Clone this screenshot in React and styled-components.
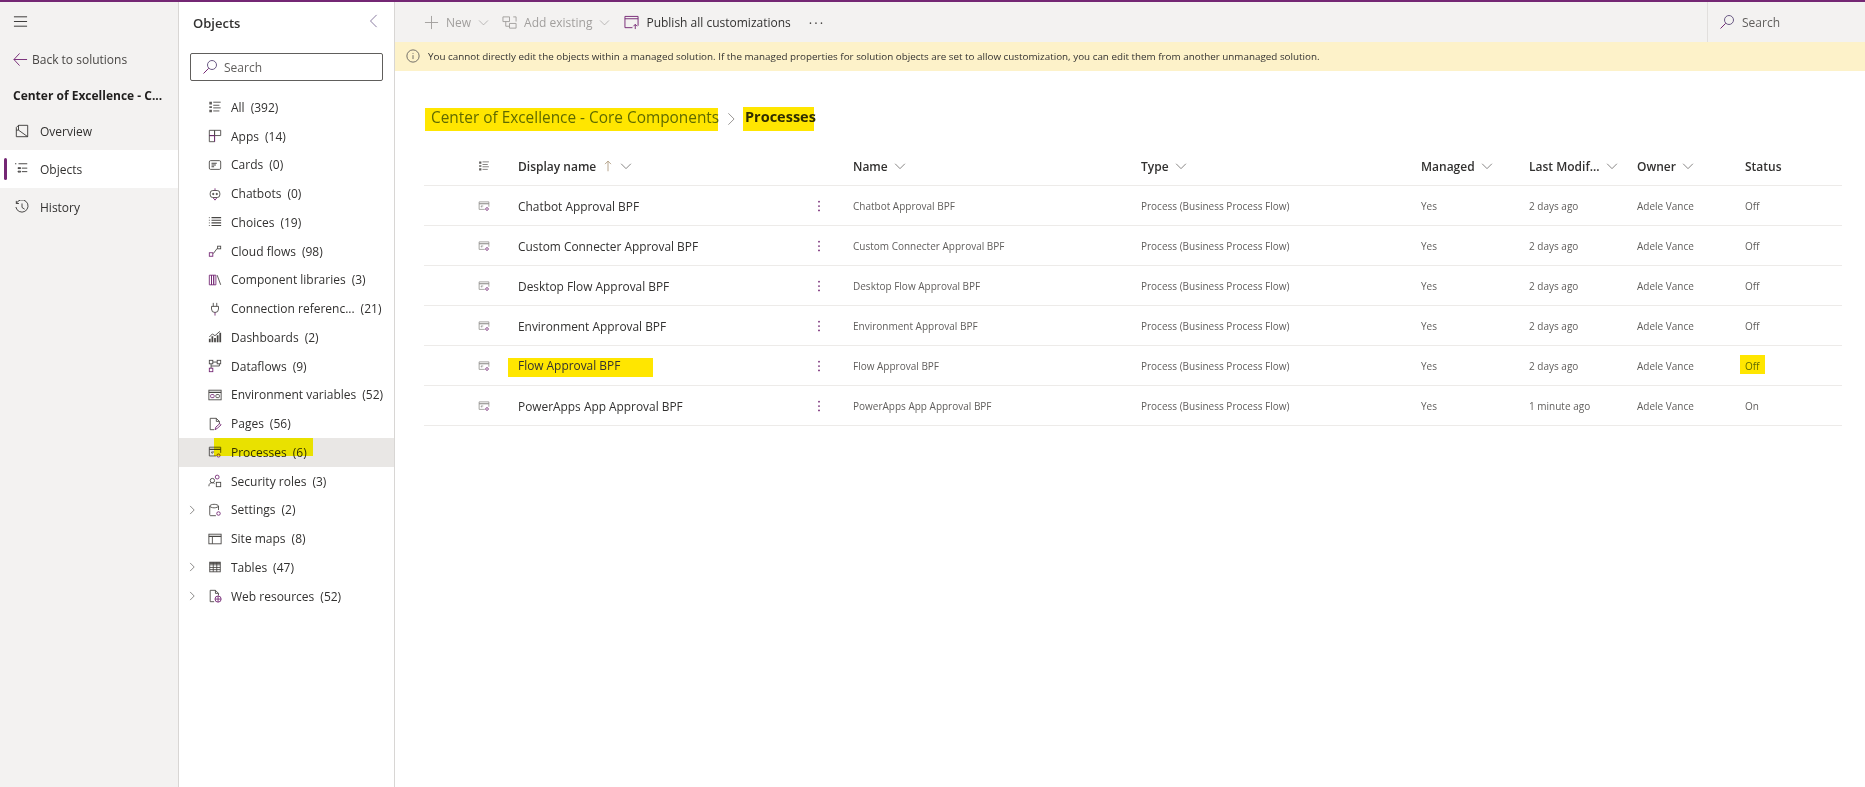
import React from "react"
import styled, { createGlobalStyle } from "styled-components"

const FONT = `"Open Sans", "Noto Sans", "Liberation Sans", sans-serif`

const Global = createGlobalStyle`
  html, body { margin: 0; padding: 0; background: #fff; }
  body { font-family: ${FONT}; color: #323130; overflow: hidden; }
  * { box-sizing: border-box; }
`

const Page = styled.div`
  height: 787px;
  display: flex;
  flex-direction: column;
  border-top: 2px solid #742774;
`

const Shell = styled.div`
  flex: 1;
  display: flex;
  min-height: 0;
`

const Rail = styled.nav`
  width: 179px;
  flex: none;
  background: #f3f2f1;
  border-right: 1px solid #d8d6d4;
  display: flex;
  flex-direction: column;
`

const Burger = styled.div`
  height: 38px;
  padding: 0 0 0 13px;
  display: flex;
  align-items: center;
  color: #323130;
`

const BackLink = styled.div`
  height: 38px;
  padding-left: 13px;
  display: flex;
  align-items: center;
  gap: 4px;
  font-size: 12px;
  color: #484644;
`

const RailTitle = styled.div`
  height: 34px;
  padding: 0 0 0 13px;
  display: flex;
  align-items: center;
  font-size: 12px;
  font-weight: 700;
  color: #201f1e;
  white-space: nowrap;
`

const RailItem = styled.div`
  position: relative;
  height: 38px;
  padding-left: 15px;
  display: flex;
  align-items: center;
  gap: 11px;
  font-size: 12px;
  color: #323130;
  background: ${props => props.$active ? "#fff" : "transparent"};
  &::before {
    content: "";
    display: ${props => props.$active ? "block" : "none"};
    position: absolute;
    left: 4px;
    top: 8px;
    bottom: 8px;
    width: 3px;
    border-radius: 2px;
    background: #742774;
  }
`

const Panel = styled.aside`
  width: 216px;
  flex: none;
  border-right: 1px solid #d8d6d4;
  display: flex;
  flex-direction: column;
`

const PanelHead = styled.div`
  height: 41px;
  padding: 0 13px 0 14px;
  display: flex;
  align-items: center;
  justify-content: space-between;
  font-size: 13px;
  font-weight: 600;
  color: #323130;
`

const PanelBack = styled.span`
  display: flex;
  margin-top: -3px;
  color: #7a6a94;
`

const SearchBox = styled.div`
  height: 28px;
  margin: 10px 11px 0 11px;
  padding-left: 11px;
  border: 1px solid #605e5c;
  border-radius: 2px;
  display: flex;
  align-items: center;
  gap: 6px;
  font-size: 12px;
  color: #605e5c;
`

const ObjectList = styled.ul`
  list-style: none;
  margin: 12px 0 0;
  padding: 0;
`

const ObjectRow = styled.li`
  height: 28.75px;
  padding-left: 8px;
  display: grid;
  grid-template-columns: 21px 16px 1fr;
  align-items: center;
  font-size: 12px;
  color: #323130;
  white-space: nowrap;
  background: ${props => props.$selected ? "#e9e7e5" : "transparent"};
`

const Caret = styled.span`
  display: flex;
  color: #484644;
`

const ObjectGlyph = styled.span`
  display: flex;
  color: #484644;
`

const ObjectLabel = styled.span`
  position: relative;
  padding-left: 7px;
  display: flex;
  gap: 6px;
`

// marker pen strokes laid over the screenshot, multiplied so what is under them shows through
const Marker = styled.span`
  display: inline-block;
  background: #ffe600;
  mix-blend-mode: multiply;
`

const SideStroke = styled.span`
  position: absolute;
  left: -10px;
  top: -6px;
  width: 99px;
  height: 18px;
  background: #fff900;
  mix-blend-mode: multiply;
`

const Content = styled.main`
  flex: 1;
  min-width: 0;
  display: flex;
  flex-direction: column;
`

const Toolbar = styled.div`
  height: 40px;
  flex: none;
  background: #f3f2f1;
  padding-left: 29px;
  display: flex;
  align-items: center;
`

const ToolButton = styled.div`
  display: flex;
  align-items: center;
  gap: 7px;
  margin-right: ${props => props.$gap || 13}px;
  font-size: 12px;
  color: ${props => props.$disabled ? "#a19f9d" : "#323130"};
`

const Dots = styled.span`
  font-size: 13px;
  letter-spacing: 2px;
  line-height: 1;
  margin: 2px 0 0 11px;
  color: #484644;
`

const ToolSearch = styled.div`
  margin-left: auto;
  width: 158px;
  height: 100%;
  border-left: 1px solid #e1dfdd;
  padding-left: 11px;
  display: flex;
  align-items: center;
  gap: 7px;
  font-size: 12px;
  color: #605e5c;
`

const Banner = styled.div`
  height: 29px;
  flex: none;
  background: #fdf2c9;
  padding: 0 0 1px 11px;
  display: flex;
  align-items: center;
  gap: 8px;
  font-size: 9.85px;
  color: #323130;
`

const Crumbs = styled.div`
  margin: 36px 0 0 30px;
  height: 24px;
  display: flex;
  align-items: center;
`

const CrumbLink = styled(Marker)`
  width: 293px;
  padding: 0 0 4px 6px;
  font-size: 15.4px;
  line-height: 19px;
  color: #5f6a00;
  white-space: nowrap;
`

const CrumbSep = styled.span`
  display: flex;
  margin: 0 5px 0 6px;
  color: #8a8886;
`

const CrumbCurrent = styled(Marker)`
  width: 71px;
  padding: 0 0 5px 2px;
  font-size: 14.5px;
  line-height: 19px;
  font-weight: 700;
  white-space: nowrap;
  color: #2f2c00;
`

const Table = styled.div`
  margin: 16px 23px 0 29px;
`

const Row = styled.div`
  height: ${props => props.$head ? 39 : 40}px;
  display: grid;
  grid-template-columns: 94px 335px 288px 280px 108px 108px 108px 1fr;
  align-items: center;
  border-bottom: 1px solid #edebe9;
`

const IconCell = styled.div`
  display: flex;
  padding-left: 54px;
  color: ${props => props.$dark ? "#605e5c" : "#8a8886"};
`

const HeadCell = styled.div`
  display: flex;
  align-items: center;
  gap: 6px;
  font-size: 12px;
  font-weight: 600;
  color: #323130;
  white-space: nowrap;
`

const HeadCaret = styled.span`
  display: flex;
  color: #605e5c;
`

const SortArrow = styled.span`
  display: flex;
  color: #a08a6a;
`

const NameCell = styled.div`
  display: flex;
  align-items: center;
  justify-content: space-between;
  padding-right: 27px;
  font-size: 11.9px;
  color: #323130;
`

const NameMarker = styled(Marker)`
  width: 145px;
  margin: -1px 0 -4px -10px;
  padding: 0 0 5px 10px;
  line-height: 14px;
`

const Cell = styled.div`
  font-size: 10px;
  color: #605e5c;
  white-space: nowrap;
`

const OffMarker = styled(Marker)`
  margin: -4px -5px -1px;
  padding: 4px 5px 1px;
  line-height: 14px;
  color: #5f6a00;
`

const Kebab = styled.span`
  display: flex;
  color: #742774;
`

const Svg = ({ size = 16, children, ...rest }) => (
  <svg width={size} height={size} viewBox="0 0 16 16" fill="none" stroke="currentColor" strokeWidth="1" {...rest}>
    {children}
  </svg>
)

const PURPLE = "#742774"

const ChevronRight = ({ size = 10 }) => (
  <Svg size={size}><path d="M5 1.5 11.5 8 5 14.5" /></Svg>
)
const ChevronDown = ({ size = 12 }) => (
  <Svg size={size}><path d="M1.5 5 8 11.5 14.5 5" /></Svg>
)

const ProcessIcon = ({ size = 14 }) => (
  <Svg size={size}>
    <path d="M9 12.5H1.5v-10h13V9" />
    <path d="M1.5 5h13" strokeWidth="1.4" />
    <path d="M4 8h3M4 8l1 2" />
    <circle cx="12" cy="12" r="1.8" stroke={PURPLE} />
  </Svg>
)

const ListIcon = ({ size = 14 }) => (
  <Svg size={size}>
    <path d="M1.5 2h3v3h-3zM1.5 7h3v2h-3zM1.5 11h3v3h-3z" fill="#605e5c" stroke="none" />
    <path d="M6 2.5h8.5M6 6h7M6 9h8.5M6 12.5h7" />
  </Svg>
)

const ICONS = {
  all: <ListIcon />,
  apps: <Svg size={14}><path d="M1.500 1.500h6v6h-6zM7.500 1.500h7v6h-7zM1.500 7.500h6v7h-6z" /><path d="M1.500 7.500h6v7" stroke={PURPLE} /></Svg>,
  cards: <Svg size={14}><rect x="1.500" y="3" width="13" height="10" rx="1.500" /><path d="M4 6h6M4 8h5M4 10h3" strokeWidth="1.300" /></Svg>,
  bots: <Svg size={14}><rect x="2.500" y="4" width="11" height="8" rx="3" /><path d="M8 1.500V4M6 12.500 8 15l2-2.500" stroke={PURPLE} /><circle cx="6" cy="8" r=".8" fill="currentColor" /><circle cx="10" cy="8" r=".8" fill="currentColor" /></Svg>,
  choices: <Svg size={14}><path d="M1 3h1M1 6h1M1 9h1M1 12h1" /><path d="M4 3h11M4 6h11M4 9h11M4 12h11" strokeWidth="1.200" /></Svg>,
  flows: <Svg size={14}><rect x="1.500" y="10" width="4" height="4" stroke={PURPLE} /><rect x="11" y="2.500" width="3.500" height="3" /><path d="M6 11 10.500 5" /></Svg>,
  libs: <Svg size={14}><path d="M1.500 2.500h2.500v11H1.500zM4 2.500h2.500v11H4zM6.500 2.500H9v11H6.500z" stroke={PURPLE} /><path d="M10.500 2.500 14.500 13.500" /></Svg>,
  conn: <Svg size={14}><path d="M6 1v4M10 1v4" /><path d="M4 5h8v3a4 4 0 0 1-8 0z" /><path d="M8 12v3.500" stroke={PURPLE} /></Svg>,
  dash: <Svg size={14}><path d="M2 14V10M5 14V7M8 14V9M11 14V6M14 14V3" strokeWidth="2" /><path d="M1.500 8 5 4.500 8 6.500 13.500 1.500" /></Svg>,
  data: <Svg size={14}><rect x="1.500" y="1.500" width="4" height="4" /><rect x="10.500" y="1.500" width="4" height="4" /><rect x="1.500" y="10.500" width="4" height="4" stroke={PURPLE} /><path d="M3.500 5.500v5M5.500 3.500h5M3.500 8h9.500V5.500" /></Svg>,
  env: <Svg size={14}><rect x="1" y="2.500" width="14" height="11" /><path d="M1 5h14" strokeWidth="1.400" /><rect x="3" y="7.500" width="4" height="3.500" rx="1" stroke={PURPLE} /><rect x="9" y="7.500" width="4" height="3.500" rx="1" /></Svg>,
  pages: <Svg size={14}><path d="M7 14.500H2.500v-13h7l3.500 3.500v3" /><path d="M9.500 1.500V5H13" /><path d="M8 14.500l1-3 4.500-4 1.500 1.500-4.500 4z" stroke={PURPLE} /></Svg>,
  proc: <ProcessIcon />,
  roles: <Svg size={14}><circle cx="5" cy="7.500" r="2.500" /><circle cx="10.500" cy="3.500" r="2.200" stroke={PURPLE} /><path d="M1 14c0-3 1.500-4 4-4 1 0 2 .3 2.500 1" /><rect x="9.500" y="9.500" width="5" height="5" /></Svg>,
  settings: <Svg size={14}><path d="M9 14.500H3a1 1 0 0 1-1-1v-10c0-1 2.500-2 5-2s5 1 5 2V8" /><path d="M2 3.500c0 1 2.500 2 5 2s5-1 5-2" /><circle cx="12" cy="12" r="2" stroke={PURPLE} /></Svg>,
  sitemap: <Svg size={14}><rect x="1" y="2.500" width="14" height="11" /><path d="M1 5h14" strokeWidth="1.400" /><path d="M5 5v8.500" /></Svg>,
  tables: <Svg size={14}><rect x="2" y="2.500" width="12" height="11" /><path d="M2 5.500h12M2 8.500h12M2 11h12M6 2.500v11M10 2.500v11" /><path d="M2 3.500h12" strokeWidth="1.800" /></Svg>,
  web: <Svg size={14}><path d="M7 14.500H2.500v-13h6l3.500 3.500v2.500" /><path d="M8.500 1.500V5H12" /><circle cx="11.500" cy="11.500" r="3.500" stroke={PURPLE} /><path d="M8 11.500h7M11.500 8v7" stroke={PURPLE} /></Svg>,
}

const OBJECTS = [
  { icon: "all", label: "All", count: 392 },
  { icon: "apps", label: "Apps", count: 14 },
  { icon: "cards", label: "Cards", count: 0 },
  { icon: "bots", label: "Chatbots", count: 0 },
  { icon: "choices", label: "Choices", count: 19 },
  { icon: "flows", label: "Cloud flows", count: 98 },
  { icon: "libs", label: "Component libraries", count: 3 },
  { icon: "conn", label: "Connection referenc...", count: 21 },
  { icon: "dash", label: "Dashboards", count: 2 },
  { icon: "data", label: "Dataflows", count: 9 },
  { icon: "env", label: "Environment variables", count: 52 },
  { icon: "pages", label: "Pages", count: 56 },
  { icon: "proc", label: "Processes", count: 6, selected: true },
  { icon: "roles", label: "Security roles", count: 3 },
  { icon: "settings", label: "Settings", count: 2, expand: true },
  { icon: "sitemap", label: "Site maps", count: 8 },
  { icon: "tables", label: "Tables", count: 47, expand: true },
  { icon: "web", label: "Web resources", count: 52, expand: true },
]

const PROCESSES = [
  { name: "Chatbot Approval BPF", modified: "2 days ago", status: "Off" },
  { name: "Custom Connecter Approval BPF", modified: "2 days ago", status: "Off" },
  { name: "Desktop Flow Approval BPF", modified: "2 days ago", status: "Off" },
  { name: "Environment Approval BPF", modified: "2 days ago", status: "Off" },
  { name: "Flow Approval BPF", modified: "2 days ago", status: "Off", marked: true },
  { name: "PowerApps App Approval BPF", modified: "1 minute ago", status: "On" },
]

const SearchGlyph = () => (
  <Svg>
    <circle cx="10" cy="6" r="4.500" stroke="#6a5a84" />
    <path d="M6.700 9.300 1.500 14.500" stroke={PURPLE} />
  </Svg>
)

const Head = ({ children, noCaret, sorted }) => (
  <HeadCell>
    {children}
    {sorted && (
      <SortArrow>
        <Svg size={12}><path d="M8 15V1.500M4 5.500l4-4 4 4" /></Svg>
      </SortArrow>
    )}
    {!noCaret && <HeadCaret><ChevronDown /></HeadCaret>}
  </HeadCell>
)

const App = () => (
  <Page>
    <Global />
    <Shell>
      <Rail>
        <Burger>
          <Svg size={15}><path d="M1 3h14M1 8h14M1 13h14" /></Svg>
        </Burger>
        <BackLink>
          <Svg size={15} stroke={PURPLE}><path d="M15 8H1M7 1.500 1 8l6 6.500" /></Svg>
          Back to solutions
        </BackLink>
        <RailTitle>Center of Excellence - C...</RailTitle>
        <RailItem>
          <Svg size={14}><path d="M1.500 4 4 1.500h10.500v13h-13zM4 1.500V7l10.500 7.500M4 7H1.500" /></Svg>
          Overview
        </RailItem>
        <RailItem $active>
          <Svg size={14}><path d="M0 2h1.500M4 2h10M3.500 6.500h3v1h-3zM3.500 10.500h3v1h-3zM8 7h6M8 11h6" /></Svg>
          Objects
        </RailItem>
        <RailItem>
          <Svg size={14}><path d="M1.500 4A7 7 0 1 1 1 8" /><path d="M1.500 1v3h3M8 4v4.500l3 2" /></Svg>
          History
        </RailItem>
      </Rail>

      <Panel>
        <PanelHead>
          Objects
          <PanelBack>
            <Svg size={14}><path d="M11 1 4 8l7 7" /></Svg>
          </PanelBack>
        </PanelHead>
        <SearchBox>
          <SearchGlyph />
          Search
        </SearchBox>
        <ObjectList>
          {OBJECTS.map(o => (
            <ObjectRow key={o.label} $selected={o.selected}>
              <Caret>{o.expand && <ChevronRight />}</Caret>
              <ObjectGlyph>{ICONS[o.icon]}</ObjectGlyph>
              <ObjectLabel>
                <span>{o.label}</span>
                <span>({o.count})</span>
                {o.selected && <SideStroke />}
              </ObjectLabel>
            </ObjectRow>
          ))}
        </ObjectList>
      </Panel>

      <Content>
        <Toolbar>
          <ToolButton $disabled>
            <Svg size={15}><path d="M8 1v14M1 8h14" /></Svg>
            New
            <ChevronDown size={11} />
          </ToolButton>
          <ToolButton $disabled $gap={14}>
            <Svg size={15}><path d="M1 2h7v5H1zM8 9h7v5H8zM12 2h3v5M4 7v5h4" /></Svg>
            Add existing
            <ChevronDown size={11} />
          </ToolButton>
          <ToolButton>
            <Svg size={15} stroke={PURPLE}><path d="M9 13.500H1v-12h14v10M1 4h14" /><path d="M12 15V10M10 12l2-2 2 2" /></Svg>
            Publish all customizations
            <Dots>···</Dots>
          </ToolButton>
          <ToolSearch>
            <SearchGlyph />
            Search
          </ToolSearch>
        </Toolbar>

        <Banner>
          <Svg size={14} stroke="#605e5c"><circle cx="8" cy="8" r="7" /><path d="M8 7v4.500M8 4.500v1" /></Svg>
          You cannot directly edit the objects within a managed solution. If the managed properties for solution objects are set to allow customization, you can edit them from another unmanaged solution.
        </Banner>

        <Crumbs>
          <CrumbLink>Center of Excellence - Core Components</CrumbLink>
          <CrumbSep><ChevronRight size={14} /></CrumbSep>
          <CrumbCurrent>Processes</CrumbCurrent>
        </Crumbs>

        <Table>
          <Row $head>
            <IconCell $dark><ListIcon size={12} /></IconCell>
            <Head sorted>Display name</Head>
            <Head>Name</Head>
            <Head>Type</Head>
            <Head>Managed</Head>
            <Head>Last Modif...</Head>
            <Head>Owner</Head>
            <Head noCaret>Status</Head>
          </Row>
          {PROCESSES.map(p => (
            <Row key={p.name}>
              <IconCell><ProcessIcon size={12} /></IconCell>
              <NameCell>
                {p.marked ? <NameMarker>{p.name}</NameMarker> : <span>{p.name}</span>}
                <Kebab>
                  <Svg size={14} stroke="none" fill="currentColor">
                    <circle cx="8" cy="3" r="1" />
                    <circle cx="8" cy="8" r="1" />
                    <circle cx="8" cy="13" r="1" />
                  </Svg>
                </Kebab>
              </NameCell>
              <Cell>{p.name}</Cell>
              <Cell>Process (Business Process Flow)</Cell>
              <Cell>Yes</Cell>
              <Cell>{p.modified}</Cell>
              <Cell>Adele Vance</Cell>
              <Cell>{p.marked ? <OffMarker>{p.status}</OffMarker> : p.status}</Cell>
            </Row>
          ))}
        </Table>
      </Content>
    </Shell>
  </Page>
)

export default App
